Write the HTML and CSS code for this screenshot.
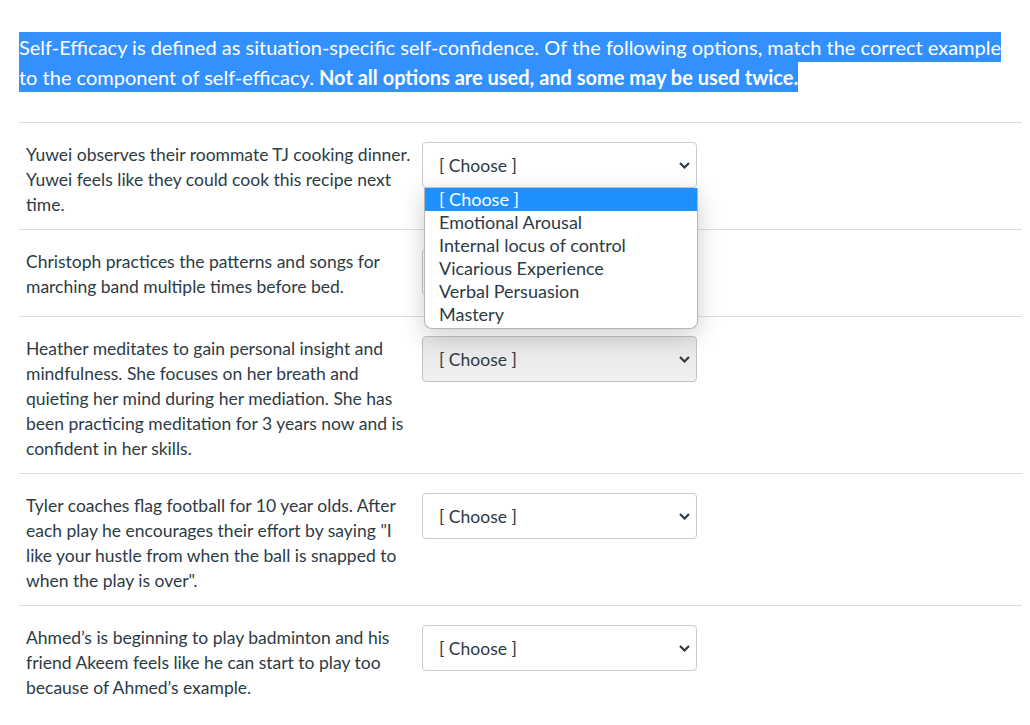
FILE: index.html
```html
<!DOCTYPE html>
<html>
<head>
  <meta name="viewport" content="width=device-width, initial-scale=1">
  <link rel="stylesheet" href="styles.css">
</head>
<body>

<div class="question">
  <p class="prompt"><span class="selected">Self-Efficacy is defined as situation-specific self-confidence. Of the following options, match the correct example to the component of self-efficacy. <strong>Not all options are used, and some may be used twice.</strong></span></p>
</div>

<div class="answers">
  <div class="answer">
    <div class="answer-text">Yuwei observes their roommate TJ cooking dinner. Yuwei feels like they could cook this recipe next time.</div>
    <div class="select-wrap">
      <div class="select">
        <span class="value">[ Choose ]</span>
        <svg class="chevron" width="11" height="7" viewBox="0 0 11 7"><path d="M1 1 L5.5 5.5 L10 1" fill="none" stroke="#2d3b45" stroke-width="2.2"/></svg>
      </div>
      <!-- open native list -->
      <ul class="options">
        <li class="active">[ Choose ]</li>
        <li>Emotional Arousal</li>
        <li>Internal locus of control</li>
        <li>Vicarious Experience</li>
        <li>Verbal Persuasion</li>
        <li>Mastery</li>
      </ul>
    </div>
  </div>

  <div class="answer">
    <div class="answer-text">Christoph practices the patterns and songs for marching band multiple times before bed.</div>
    <div class="select-wrap">
      <div class="select">
        <span class="value">[ Choose ]</span>
        <svg class="chevron" width="11" height="7" viewBox="0 0 11 7"><path d="M1 1 L5.5 5.5 L10 1" fill="none" stroke="#2d3b45" stroke-width="2.2"/></svg>
      </div>
    </div>
  </div>

  <div class="answer">
    <div class="answer-text">Heather meditates to gain personal insight and mindfulness. She focuses on her breath and quieting her mind during her mediation. She has been practicing meditation for 3 years now and is confident in her skills.</div>
    <div class="select-wrap">
      <div class="select hover">
        <span class="value">[ Choose ]</span>
        <svg class="chevron" width="11" height="7" viewBox="0 0 11 7"><path d="M1 1 L5.5 5.5 L10 1" fill="none" stroke="#2d3b45" stroke-width="2.2"/></svg>
      </div>
    </div>
  </div>

  <div class="answer">
    <div class="answer-text">Tyler coaches flag football for 10 year olds. After each play he encourages their effort by saying "I like your hustle from when the ball is snapped to when the play is over".</div>
    <div class="select-wrap">
      <div class="select">
        <span class="value">[ Choose ]</span>
        <svg class="chevron" width="11" height="7" viewBox="0 0 11 7"><path d="M1 1 L5.5 5.5 L10 1" fill="none" stroke="#2d3b45" stroke-width="2.2"/></svg>
      </div>
    </div>
  </div>

  <div class="answer">
    <div class="answer-text">Ahmed’s is beginning to play badminton and his friend Akeem feels like he can start to play too because of Ahmed’s example.</div>
    <div class="select-wrap">
      <div class="select">
        <span class="value">[ Choose ]</span>
        <svg class="chevron" width="11" height="7" viewBox="0 0 11 7"><path d="M1 1 L5.5 5.5 L10 1" fill="none" stroke="#2d3b45" stroke-width="2.2"/></svg>
      </div>
    </div>
  </div>
</div>

</body>
</html>
```

FILE: styles.css
```css
body {
  font-family: Lato, "Liberation Sans", sans-serif;
  margin: 0;
  background-color: #fff;
  color: #2d3b45;
  overflow: hidden;
}

.question {
  padding: 32px 0 0 19px;
  width: 990px;
}

.prompt {
  margin: 0;
  font-size: 20px;
  line-height: 30px;
}

.selected {
  background-color: #3390ff;
  color: #fff;
  padding: 3px 0;
}

.selected strong {
  font-weight: bold;
}

.answers {
  margin: 30px 8px 0 19px;
}

.answer {
  display: flex;
  border-top: 1px solid #dcdcdc;
  padding: 19px 0 12px 7px;
}

.answer-text {
  width: 390px;
  font-size: 17.5px;
  line-height: 25px;
}

.select-wrap {
  position: relative;
  margin-left: 6px;
}

.select {
  width: 275px;
  height: 46px;
  box-sizing: border-box;
  border: 1px solid #c7cdd1;
  border-radius: 4px;
  background-color: #fff;
  display: flex;
  align-items: center;
  justify-content: space-between;
  padding: 0 6px 0 16px;
  margin-bottom: 9px;
  font-size: 17.5px;
}

.select.hover {
  background: linear-gradient(#e6e6e6, #f1f1f1);
  border-color: #c2c2c2;
}

.options {
  position: absolute;
  top: 46px;
  left: 2px;
  width: 272px;
  margin: 0;
  padding: 0 0 2px;
  list-style: none;
  background-color: #fff;
  border: 1px solid #b5b5b5;
  border-top: none;
  border-radius: 0 0 8px 8px;
  box-shadow: 0 6px 24px rgba(0, 0, 0, 0.2);
  z-index: 2;
  font-size: 18px;
}

.options li {
  height: 23px;
  line-height: 23px;
  padding-left: 14px;
}

.options li.active {
  background-color: #1e90ff;
  color: #fff;
}
```
